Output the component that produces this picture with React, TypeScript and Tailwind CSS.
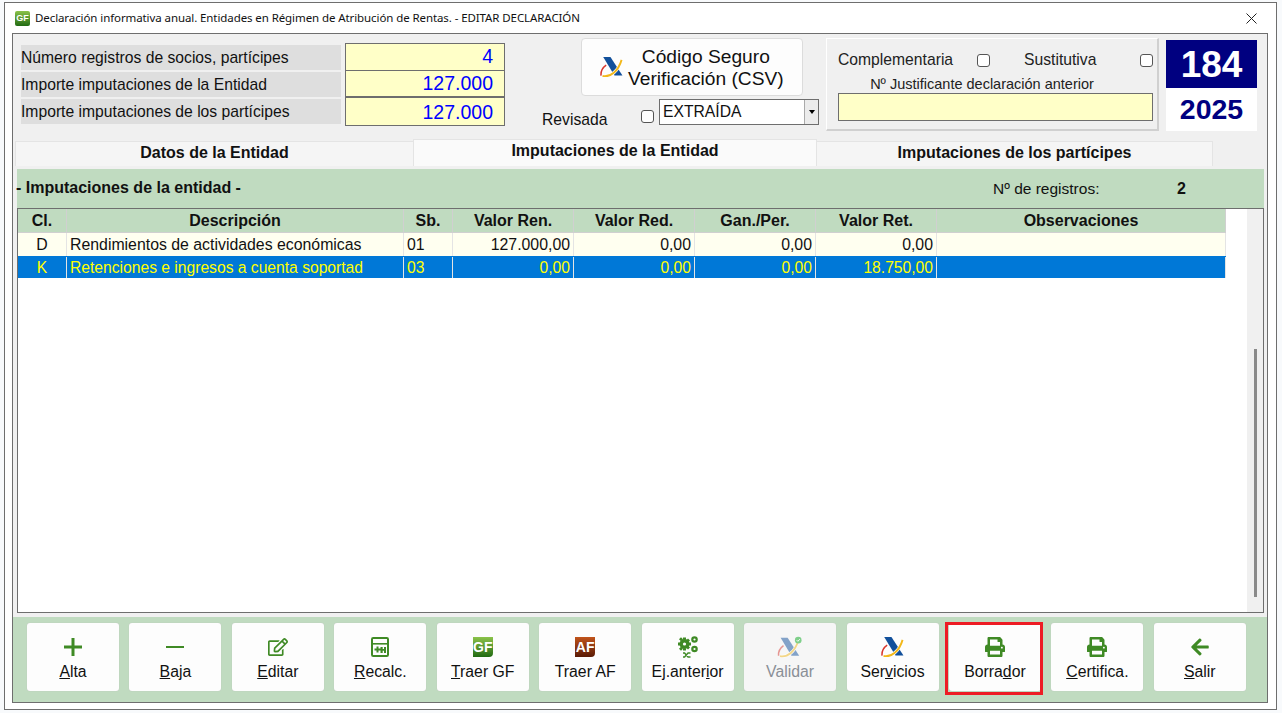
import { FaArrowLeft, FaPrint, FaRegEdit } from "react-icons/fa";
import type { ReactNode } from "react";

function AeatLogo({ width = 23, height = 20, faded = false }: { width?: number; height?: number; faded?: boolean }) {
  return (
    <svg width={width + (faded ? 3 : 0)} height={height + (faded ? 2 : 0)} viewBox={faded ? "0 -2 27 24" : "0 0 24 21"}>
      <g className={faded ? "opacity-50" : ""}>
        <path d="M3.3 0h7.6l12.6 19.5h-8.4z" fill="#12509b" />
        <path d="M1 19.5C.6 14.5 3 11 6.4 8.6" fill="none" stroke="#d8372e" strokeWidth="1.6" />
        <path d="M2.6 20C11 21.6 19 15 22.6 3" fill="none" stroke="#fff" strokeWidth="3.4" />
        <path d="M2.6 20C11 21.6 19 15 22.6 3" fill="none" stroke="#f2b81b" strokeWidth="2" />
      </g>
      {faded && (
        <>
          <circle cx="22.5" cy="2.5" r="3.6" fill="#7fcf8a" />
          <path d="M20.8 2.5l1.3 1.3 2.2-2.4" fill="none" stroke="#fff" strokeWidth="1" />
        </>
      )}
    </svg>
  );
}

function PlusIcon() {
  return (
    <svg width="18" height="18" viewBox="0 0 18 18" fill="#3f8a25">
      <path d="M7.5 0h3v18h-3z" />
      <path d="M0 7.5h18v3H0z" />
    </svg>
  );
}

function MinusIcon() {
  return (
    <svg width="18" height="18" viewBox="0 0 18 18" fill="#3f8a25">
      <path d="M0 8h18v2H0z" />
    </svg>
  );
}

function RecalcIcon() {
  return (
    <svg width="18" height="20" viewBox="0 0 18 20">
      <rect x="1" y="1" width="16" height="18" rx="1.2" fill="none" stroke="#3f8a25" strokeWidth="2" />
      <rect x="1" y="6" width="16" height="1.6" fill="#3f8a25" />
      <path d="M3.5 11.500h6v2h-6zM5.500 9.500h2v6h-2zM9.500 10h2.200v6H9.500zM13 10h2v6h-2zM10 12h4v1.800h-4z" fill="#3f8a25" />
    </svg>
  );
}

function GearsIcon() {
  return (
    <svg width="20" height="22" viewBox="0 0 20 22" fill="#3f8a25">
      <circle cx="6.500" cy="8" r="5" />
      <circle cx="6.500" cy="8" r="1.600" fill="#fff" />
      <path d="M5 1.400h3v2.400H5zM5 12.200h3v2.400H5zM0 6.500h2.400v3H0zM10.600 6.500H13v3h-2.400zM1 3.300l2-2 2 2-2 2zM8 11.600l2-2 2 2-2 2zM1 12.700l2-2 2 2-2 2zM8 4.400l2-2 2 2-2 2z" />
      <circle cx="16.500" cy="3.500" r="2.200" fill="none" stroke="#3f8a25" strokeWidth="2.200" />
      <circle cx="16.500" cy="13" r="2.200" fill="none" stroke="#3f8a25" strokeWidth="2.200" />
      <path d="M5 17h1.600l3.400 4h2.500M5 21h1.600l3.400-4h2.500" fill="none" stroke="#3f8a25" strokeWidth="1.300" />
    </svg>
  );
}

function AppBadge({ text, from, to }: { text: string; from: string; to: string }) {
  return (
    <div
      className={`w-5 h-5 flex items-center justify-center rounded-br-[4px] font-bold text-[14px] leading-none text-white bg-gradient-to-b ${from} ${to}`}
    >
      {text}
    </div>
  );
}

function AppBadgeSmall() {
  return (
    <div className="w-[15px] h-[15px] flex items-center justify-center rounded-[2px] bg-gradient-to-b from-[#8bc34a] to-[#1f6b12] text-white font-bold text-[9px] leading-none">
      GF
    </div>
  );
}

function Label({ text, u }: { text: string; u?: number }) {
  if (u === undefined) return <span>{text}</span>;
  return (
    <span>
      {text.slice(0, u)}
      <span className="underline">{text[u]}</span>
      {text.slice(u + 1)}
    </span>
  );
}

function ToolButton({
  icon,
  text,
  u,
  disabled,
}: {
  icon: ReactNode;
  text: string;
  u?: number;
  disabled?: boolean;
}) {
  return (
    <div
      className={`w-[92px] h-[68px] flex flex-col items-center rounded-[3px] text-[15.8px] leading-[20px] shadow-[0_0_1px_#b5b5b5] ${
        disabled ? "bg-[#f6f6f6] text-[#8a8f96]" : "bg-[#fdfdfd] text-[#111]"
      }`}
    >
      <div className="h-[24px] mt-[12px] flex items-center justify-center text-[#3f8a25]">{icon}</div>
      <div className="mt-[3px]">
        <Label text={text} u={u} />
      </div>
    </div>
  );
}

function Check() {
  return <div className="w-[13px] h-[13px] rounded-[3px] border border-[#555] bg-white shrink-0" />;
}

const columns = [
  { title: "Cl.", w: "w-[49px]" },
  { title: "Descripción", w: "w-[337px]" },
  { title: "Sb.", w: "w-[49px]" },
  { title: "Valor Ren.", w: "w-[121px]" },
  { title: "Valor Red.", w: "w-[121px]" },
  { title: "Gan./Per.", w: "w-[121px]" },
  { title: "Valor Ret.", w: "w-[121px]" },
  { title: "Observaciones", w: "w-[289px]" },
];

const rows = [
  ["D", "Rendimientos de actividades económicas", "01", "127.000,00", "0,00", "0,00", "0,00", ""],
  ["K", "Retenciones e ingresos a cuenta soportad", "03", "0,00", "0,00", "0,00", "18.750,00", ""],
];

function Cell({ i, value }: { i: number; value: string }) {
  const align = i === 0 ? "justify-center" : i > 2 ? "justify-end pr-[3px]" : "justify-start pl-[3px]";
  return (
    <div className={`${columns[i].w} shrink-0 h-full flex items-center overflow-hidden whitespace-nowrap border-r border-[#e4e4e4] ${align}`}>
      {value}
    </div>
  );
}

export default function App() {
  return (
    <div className="w-[1282px] h-[713px] bg-[#f8fafc] pt-[2px] pl-[4px] font-['Liberation_Sans',Arial,sans-serif] overflow-hidden">
      <div className="w-[1273px] h-[708px] bg-white border border-[#6e6e6e] flex flex-col">
        <div className="h-[30px] flex items-center pl-[10px] pr-[9px] shrink-0">
          <AppBadgeSmall />
          <span className="ml-[5px] text-[11.5px] tracking-[-0.09px] text-[#111] font-['Noto_Sans',sans-serif] whitespace-nowrap">
            Declaración informativa anual. Entidades en Régimen de Atribución de Rentas. - EDITAR DECLARACIÓN
          </span>
          <svg width="11" height="11" viewBox="0 0 11 11" className="ml-auto mr-[10px]">
            <path d="M.5.5l10 10M10.500.5l-10 10" stroke="#222" strokeWidth="1" />
          </svg>
        </div>

        <div className="w-[1256px] h-[670px] ml-[7px] border border-[#6e6e6e] bg-[#f0f0f0] flex flex-col shrink-0">
          {/* cabecera */}
          <div className="h-[104px] flex shrink-0">
            <div className="w-[328px] pl-[8px] pt-[11px] flex flex-col gap-[2px] text-[15.7px] text-[#111] shrink-0">
              <div className="h-[25px] bg-[#dedede] flex items-center">Número registros de socios, partícipes</div>
              <div className="h-[25px] bg-[#dedede] flex items-center">Importe imputaciones de la Entidad</div>
              <div className="h-[25px] bg-[#dedede] flex items-center">Importe imputaciones de los partícipes</div>
            </div>
            <div className="w-[160px] ml-[4px] mt-[9px] h-[83px] border border-[#6e6e6e] bg-[#ffffc8] flex flex-col text-[19.5px] text-[#0000ff] shrink-0">
              <div className="h-[27px] flex items-center justify-end pr-[11px] border-b border-[#6e6e6e]">4</div>
              <div className="h-[27px] flex items-center justify-end pr-[11px] border-b-2 border-[#6e6e6e]">127.000</div>
              <div className="flex-1 flex items-center justify-end pr-[11px] pb-[3px]">127.000</div>
            </div>
            <div className="w-[280px] ml-[36px] shrink-0 flex flex-col">
              <div className="ml-[40px] mt-[4px] w-[222px] h-[58px] bg-[#fdfdfd] border border-[#dcdcdc] rounded-[4px] flex items-center pl-[18px] shrink-0">
                <AeatLogo />
                <div className="text-[19.2px] leading-[22px] pt-[1px] text-center text-[#111] ml-[5px] whitespace-nowrap">
                  Código Seguro
                  <br />
                  Verificación (CSV)
                </div>
              </div>
              <div className="flex h-[28px] mt-[3px] text-[15.7px] text-[#111]">
                <span className="w-[66px] ml-[1px] mt-[12px] leading-[18px] whitespace-nowrap">Revisada</span>
                <div className="ml-[33px] mt-[11px]">
                  <Check />
                </div>
                <div className="ml-[5px] w-[160px] h-[26px] border border-[#6e6e6e] bg-white flex items-center pl-[3px]">
                  EXTRAÍDA
                  <div className="ml-auto w-[14px] h-full bg-[#ececec] border-l border-[#aaa] flex items-center justify-center">
                    <div className="w-0 h-0 border-x-[3px] border-x-transparent border-t-[4px] border-t-black" />
                  </div>
                </div>
              </div>
            </div>
            <div className="w-[333px] h-[93px] ml-[5px] mt-[4px] border-t border-l border-white border-r-2 border-b-2 border-r-[#d0d0d0] border-b-[#d0d0d0] text-[#222] shrink-0 flex flex-col">
              <div className="flex items-center h-[40px] pl-[11px] pt-[2px] text-[15.7px]">
                <span className="w-[115px] whitespace-nowrap">Complementaria</span>
                <div className="ml-[24px]">
                  <Check />
                </div>
                <span className="ml-[34px] w-[71px] whitespace-nowrap">Sustitutiva</span>
                <div className="ml-[45px]">
                  <Check />
                </div>
              </div>
              <div className="text-center text-[14.5px] leading-[16px] -mt-[3px] pr-[20px]">Nº Justificante declaración anterior</div>
              <div className="ml-[11px] mt-[1px] w-[315px] h-[28px] bg-[#ffffc8] border border-[#6e6e6e]" />
            </div>
            <div className="ml-[7px] mt-[6px] w-[91px] h-[91px] flex flex-col font-bold shrink-0">
              <div className="h-[48px] bg-[#000080] text-white text-[37px] flex items-center justify-center pt-[1px]">184</div>
              <div className="h-[43px] bg-white text-[#000080] text-[28.5px] flex items-center justify-center pb-[1px]">2025</div>
            </div>
          </div>

          {/* pestañas */}
          <div className="h-[28px] flex items-end pl-[2px] font-bold text-[16px] text-[#111] shrink-0">
            <div className="w-[398px] h-[25px] bg-[#f5f5f5] border-t border-l border-[#e4e4e4] flex items-center justify-center pb-[2px]">Datos de la Entidad</div>
            <div className="w-[404px] h-[27px] bg-[#fafafa] border-t border-x border-[#e4e4e4] flex items-center justify-center pb-[5px]">Imputaciones de la Entidad</div>
            <div className="w-[396px] h-[25px] bg-[#f5f5f5] border-t border-r border-[#e4e4e4] flex items-center justify-center pb-[2px]">Imputaciones de los partícipes</div>
          </div>

          {/* cuerpo */}
          <div className="ml-[4px] mr-[3px] mt-[3px] flex-1 min-h-0 flex flex-col">
            <div className="h-[39px] bg-[#c0dbc0] flex items-center text-[16px] text-[#111] shrink-0">
              <span className="-ml-[1px] w-[977px] font-bold whitespace-nowrap pb-[2px]">- Imputaciones de la entidad -</span>
              <span className="w-[184px] text-[15.5px] whitespace-nowrap">Nº de registros:</span>
              <span className="font-bold">2</span>
            </div>
            <div className="h-[405px] border border-[#6e6e6e] bg-white flex shrink-0">
              <div className="w-[1208px] text-[15.7px] shrink-0">
                <div className="h-[24px] flex bg-[#c0dbc0] border-b border-[#d0d0d0] font-bold text-[16px] text-[#111]">
                  {columns.map((c) => (
                    <div key={c.title} className={`${c.w} shrink-0 border-r border-[#d0d0d0] flex items-center justify-center`}>
                      {c.title}
                    </div>
                  ))}
                </div>
                <div className="h-[23px] flex bg-[#fffff0] text-[#111] text-[15.85px]">
                  {rows[0].map((v, i) => (
                    <Cell key={i} i={i} value={v} />
                  ))}
                </div>
                <div className="h-[22px] flex bg-[#0078d7] text-[#ffff00] text-[15.65px] pt-[1px]">
                  {rows[1].map((v, i) => (
                    <Cell key={i} i={i} value={v} />
                  ))}
                </div>
              </div>
              <div className="w-[21px] shrink-0" />
              <div className="flex-1 bg-[#f0f0f0] flex flex-col items-center">
                <div className="w-[3px] h-[248px] mt-[140px] bg-[#8a8a8a]" />
              </div>
            </div>
          </div>

          {/* botones */}
          <div className="h-[85px] mt-[4px] bg-[#c0dbc0] flex items-center pl-[14px] gap-[10.45px] shrink-0 pb-[5px]">
            <ToolButton icon={<PlusIcon />} text="Alta" u={0} />
            <ToolButton icon={<MinusIcon />} text="Baja" u={0} />
            <ToolButton icon={<FaRegEdit size={20} />} text="Editar" u={0} />
            <ToolButton icon={<RecalcIcon />} text="Recalc." u={0} />
            <ToolButton icon={<AppBadge text="GF" from="from-[#8bc34a]" to="to-[#1f6b12]" />} text="Traer GF" u={0} />
            <ToolButton icon={<AppBadge text="AF" from="from-[#c2541b]" to="to-[#5a1a06]" />} text="Traer AF" />
            <ToolButton icon={<GearsIcon />} text="Ej.anterior" u={8} />
            <ToolButton icon={<AeatLogo faded />} text="Validar" disabled />
            <ToolButton icon={<AeatLogo />} text="Servicios" u={3} />
            <div className="relative">
              <ToolButton icon={<FaPrint size={20} />} text="Borrador" u={5} />
              <div className="absolute -left-[4px] -top-[1px] -right-[2px] -bottom-[4px] border-[3px] border-[#ed1c24]" />
            </div>
            <ToolButton icon={<FaPrint size={20} />} text="Certifica." u={0} />
            <ToolButton icon={<FaArrowLeft size={20} />} text="Salir" u={0} />
          </div>
        </div>
      </div>
    </div>
  );
}
